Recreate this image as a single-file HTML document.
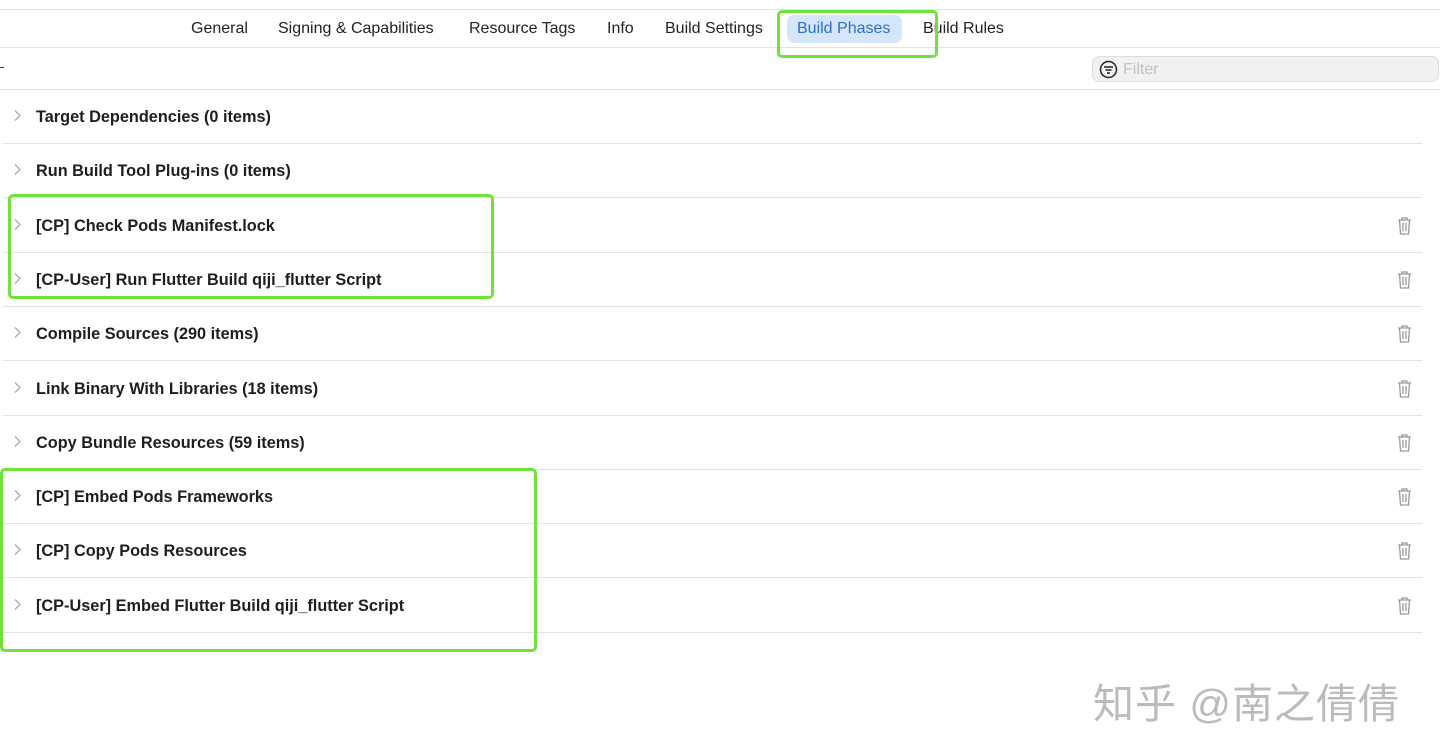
<!DOCTYPE html>
<html><head><meta charset="utf-8"><style>
body{margin:0;width:1440px;height:753px;background:#fff;position:relative;overflow:hidden;font-family:"Liberation Sans",Arial,sans-serif}
.abs{position:absolute}
.tab{position:absolute;top:20px;font-size:16px;color:#222;white-space:nowrap}
.hl{position:absolute;height:1px;background:#e3e3e3}
.row{position:absolute;left:36px;font-size:16.3px;font-weight:bold;color:#1e1e1e;white-space:nowrap}
.green{position:absolute;border:3px solid #6fe33a;border-radius:5px;box-sizing:border-box}
.wm{position:absolute;left:1093px;top:670px;font-size:41px;color:#bbb;font-family:"Liberation Sans","Noto Sans CJK SC",sans-serif;letter-spacing:1px}
</style></head><body>
<div class="hl" style="left:0;width:1440px;top:9px"></div>
<div class="hl" style="left:0;width:1440px;top:47px"></div>
<div class="hl" style="left:0;width:1440px;top:89px"></div>
<span class="tab" style="left:191px">General</span>
<span class="tab" style="left:278px">Signing &amp; Capabilities</span>
<span class="tab" style="left:469px">Resource Tags</span>
<span class="tab" style="left:607px">Info</span>
<span class="tab" style="left:665px">Build Settings</span>
<div class="abs" style="left:787px;top:15px;width:115px;height:28px;background:#d6e6fa;border-radius:7px"></div>
<span class="tab" style="left:797px;color:#2a6fd0">Build Phases</span>
<span class="tab" style="left:923px">Build Rules</span>
<div class="green" style="left:777px;top:10px;width:161px;height:48px"></div>
<div class="abs" style="left:0;top:67px;width:4px;height:1px;background:#333"></div>
<div class="abs" style="left:1092px;top:56px;width:347px;height:26px;background:#f1f1f1;border:1px solid #ddd;border-radius:7px;box-sizing:border-box"></div>
<svg class="abs" style="left:1099px;top:60px" width="19" height="19" viewBox="0 0 19 19"><circle cx="9.5" cy="9.5" r="8" fill="none" stroke="#222" stroke-width="1.5"/><path d="M5 7h9M6.5 10h6M8 13h3" stroke="#222" stroke-width="1.4"/></svg>
<span class="abs" style="left:1123px;top:61px;font-size:16px;color:#c0c0c0">Filter</span>

<div id="rows"></div>
<script>
var names=["Target Dependencies (0 items)","Run Build Tool Plug-ins (0 items)","[CP] Check Pods Manifest.lock","[CP-User] Run Flutter Build qiji_flutter Script","Compile Sources (290 items)","Link Binary With Libraries (18 items)","Copy Bundle Resources (59 items)","[CP] Embed Pods Frameworks","[CP] Copy Pods Resources","[CP-User] Embed Flutter Build qiji_flutter Script"];
var h="";
for(var i=0;i<10;i++){var c=117+i*54.3;
h+='<svg class="abs" style="left:13px;top:'+(c-8)+'px" width="8" height="13" viewBox="0 0 8 13"><path d="M2 1.5l5 5-5 5" fill="none" stroke="#aaa" stroke-width="1.3"/></svg>';
h+='<span class="row" style="top:'+(c-9)+'px">'+names[i]+'</span>';
h+='<div class="hl" style="left:3px;width:1419px;top:'+Math.round(c+26)+'px"></div>';
if(i>=2)h+='<svg class="abs" style="left:1396px;top:'+(c-10)+'px" width="17" height="19" viewBox="0 0 17 19"><path d="M2 4h13M6 4V2h5v2M3.5 4l1 14h8l1-14M7 7v8M10 7v8" fill="none" stroke="#999" stroke-width="1.3"/></svg>';}
document.getElementById("rows").innerHTML=h;
</script>
<div class="green" style="left:8px;top:194px;width:486px;height:105px"></div>
<div class="green" style="left:0;top:468px;width:537px;height:184px"></div>
<div class="wm">知乎 @南之倩倩</div>
</body></html>
